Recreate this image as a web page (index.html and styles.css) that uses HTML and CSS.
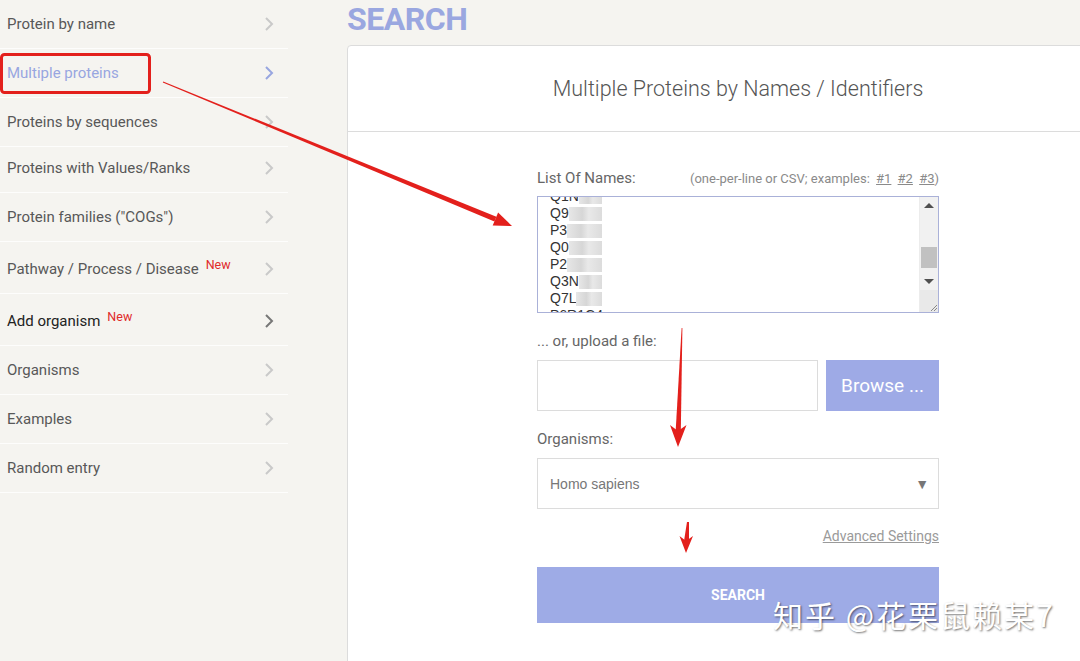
FILE: index.html
```html
<!DOCTYPE html>
<html lang="en">
<head>
  <meta charset="UTF-8" />
  <title>Search - Multiple proteins</title>
  <link rel="stylesheet" href="styles.css">
</head>
<body>

<div class="page">
  <!-- Left menu -->
  <nav class="sidebar">
    <a class="item">Protein by name <span class="chev"><svg width="10" height="16" viewBox="0 0 10 16"><polyline points="2,2 8,8 2,14" /></svg></span></a>
    <a class="item active">Multiple proteins <span class="chev"><svg width="10" height="16" viewBox="0 0 10 16"><polyline points="2,2 8,8 2,14" /></svg></span></a>
    <a class="item">Proteins by sequences <span class="chev"><svg width="10" height="16" viewBox="0 0 10 16"><polyline points="2,2 8,8 2,14" /></svg></span></a>
    <a class="item tight">Proteins with Values/Ranks <span class="chev"><svg width="10" height="16" viewBox="0 0 10 16"><polyline points="2,2 8,8 2,14" /></svg></span></a>
    <a class="item">Protein families ("COGs") <span class="chev"><svg width="10" height="16" viewBox="0 0 10 16"><polyline points="2,2 8,8 2,14" /></svg></span></a>
    <a class="item has-new">Pathway / Process / Disease <sup class="new">New</sup> <span class="chev"><svg width="10" height="16" viewBox="0 0 10 16"><polyline points="2,2 8,8 2,14" /></svg></span></a>
    <a class="item has-new dark">Add organism <sup class="new">New</sup> <span class="chev"><svg width="10" height="16" viewBox="0 0 10 16"><polyline points="2,2 8,8 2,14" /></svg></span></a>
    <a class="item">Organisms <span class="chev"><svg width="10" height="16" viewBox="0 0 10 16"><polyline points="2,2 8,8 2,14" /></svg></span></a>
    <a class="item">Examples <span class="chev"><svg width="10" height="16" viewBox="0 0 10 16"><polyline points="2,2 8,8 2,14" /></svg></span></a>
    <a class="item">Random entry <span class="chev"><svg width="10" height="16" viewBox="0 0 10 16"><polyline points="2,2 8,8 2,14" /></svg></span></a>
  </nav>

  <!-- Main search panel -->
  <main class="main">
    <h1 class="page-title">SEARCH</h1>
    <section class="card">
      <header class="card-head">Multiple Proteins by Names / Identifiers</header>

      <div class="form">
        <div class="label-row">
          <label>List Of Names:</label>
          <span class="hint">(one-per-line or CSV; examples: <a>#1</a> <a>#2</a> <a>#3</a>)</span>
        </div>
        <div class="names-box">
          <div class="names">
            <div class="names-lines">
              <div class="id">Q1N<span class="blur"></span></div>
              <div class="id">Q9<span class="blur"></span></div>
              <div class="id">P3<span class="blur"></span></div>
              <div class="id">Q0<span class="blur"></span></div>
              <div class="id">P2<span class="blur"></span></div>
              <div class="id">Q3N<span class="blur"></span></div>
              <div class="id">Q7L<span class="blur"></span></div>
              <div class="id">P6R1C4</div>
            </div>
          </div>
          <div class="scrollbar">
            <span class="sb-up"></span>
            <span class="sb-track"><span class="sb-thumb"></span></span>
            <span class="sb-down"></span>
            <span class="sb-grip"><svg width="10" height="10" viewBox="0 0 10 10"><line x1="9" y1="3" x2="3" y2="9" /><line x1="9" y1="6" x2="6" y2="9" /></svg></span>
          </div>
        </div>

        <label class="field-label">... or, upload a file:</label>
        <div class="upload-row">
          <div class="file-box"></div>
          <button class="browse">Browse ...</button>
        </div>

        <label class="field-label">Organisms:</label>
        <div class="select">
          <span>Homo sapiens</span>
          <span class="caret">&#9660;</span>
        </div>

        <div class="adv"><a>Advanced Settings</a></div>

        <button class="search-btn">SEARCH</button>
      </div>
    </section>
  </main>
</div>

<!-- red annotation marks -->
<svg class="marks" width="1080" height="661" viewBox="0 0 1080 661">
  <rect x="1.5" y="54.5" width="148" height="38" rx="3" fill="none" stroke="#e3201c" stroke-width="3" />
  <polygon points="163.2,81.5 496.4,216.8 494.4,221.4 162.8,82.5" />
  <polygon points="512,226 498.1,212.6 492.7,225.6" />
  <polygon points="681.6,328 682.4,328 680.8,432 675.6,432" />
  <polygon points="678,447 670,425 678,431 686.5,425" />
  <polygon points="687,522 689,522 689,541 684,541" />
  <polygon points="686,553 679.5,536 686,541 693,536" />
</svg>

<div class="watermark">知乎 @花栗鼠赖某7</div>

</body>
</html>
```

FILE: styles.css
```css
* {
  box-sizing: border-box;
}
body {
  margin: 0;
  background-color: #f5f4f0;
  font-family: Roboto, "Liberation Sans", sans-serif;
  color: #555;
  overflow: hidden;
  height: 661px;
}
.page {
  display: flex;
  align-items: flex-start;
}

/* sidebar */
.sidebar {
  width: 288px;
  flex-shrink: 0;
  display: flex;
  flex-direction: column;
}
.item {
  display: flex;
  align-items: center;
  height: 49px;
  padding-left: 7px;
  padding-right: 14px;
  font-size: 15px;
  color: #585858;
  border-bottom: 1px solid #fdfdfc;
}
.item.tight {
  height: 46px;
  padding-bottom: 4px;
}
.item.has-new {
  height: 52px;
  padding-top: 3px;
}
.item.active {
  color: #98a6e0;
}
.item.dark {
  color: #222;
}
.new {
  color: #e02a2a;
  font-size: 12.5px;
  margin-left: 7px;
  position: relative;
  top: -5px;
  vertical-align: baseline;
}
.chev {
  margin-left: auto;
  display: flex;
}
.chev polyline {
  fill: none;
  stroke: #c9c9c9;
  stroke-width: 2;
}
.active .chev polyline {
  stroke: #98a6e0;
}
.dark .chev polyline {
  stroke: #777;
}

/* main */
.main {
  margin-left: 59px;
  width: 782px;
  flex-shrink: 0;
}
.page-title {
  margin: 0;
  height: 45px;
  font-size: 32px;
  line-height: 38px;
  font-weight: 700;
  color: #9aa7e0;
  letter-spacing: -0.5px;
}
.card {
  background-color: #fff;
  border: 1px solid #dcdcdc;
  border-radius: 4px 0 0 0;
  height: 640px;
}
.card-head {
  height: 86px;
  border-bottom: 1px solid #dcdcdc;
  display: flex;
  align-items: center;
  justify-content: center;
  font-size: 21.5px;
  font-weight: 300;
  color: #555;
  padding-bottom: 1px;
}
.form {
  width: 402px;
  margin: 0 auto;
  padding-top: 37px;
  display: flex;
  flex-direction: column;
}
.label-row {
  display: flex;
  justify-content: space-between;
  align-items: baseline;
  height: 18px;
  margin-bottom: 9px;
}
.label-row label,
.field-label {
  font-size: 15px;
  color: #666;
  line-height: 18px;
}
.hint {
  font-size: 13px;
  color: #8a8a8a;
}
.hint a {
  text-decoration: underline;
  margin-left: 3px;
}

/* names textarea */
.names-box {
  height: 117px;
  border: 1px solid #aab1d8;
  display: flex;
}
.names {
  flex: 1;
  overflow: hidden;
  padding-left: 12px;
}
.names-lines {
  margin-top: -9px;
  font-family: "Liberation Sans", Arial, sans-serif;
  font-size: 14px;
  line-height: 17px;
  color: #333;
}
.id {
  display: flex;
  align-items: center;
  width: 52px;
}
.blur {
  flex: 1;
  height: 14px;
  background: linear-gradient(90deg, #e4e4e4, #d2d2d2 40%, #e6e6e6 60%, #d8d8d8);
  opacity: 0.9;
}
.scrollbar {
  width: 19px;
  display: flex;
  flex-direction: column;
  background-color: #f1f1f1;
  border-left: 1px solid #ececec;
}
.sb-up,
.sb-down {
  height: 17px;
  display: flex;
  justify-content: center;
  align-items: center;
}
.sb-up::before {
  content: "";
  border-left: 5px solid transparent;
  border-right: 5px solid transparent;
  border-bottom: 5px solid #505050;
}
.sb-down::before {
  content: "";
  border-left: 5px solid transparent;
  border-right: 5px solid transparent;
  border-top: 5px solid #505050;
}
.sb-track {
  flex: 1;
  display: flex;
  flex-direction: column;
  justify-content: flex-end;
  padding: 0 1px 5px;
}
.sb-thumb {
  height: 21px;
  background-color: #c1c1c1;
}
.sb-grip {
  height: 22px;
  display: flex;
  justify-content: flex-end;
  align-items: flex-end;
  background-color: #e9e9e9;
}
.sb-grip line {
  stroke: #888;
  stroke-width: 1;
}

/* upload + organisms */
.field-label {
  margin-top: 19px;
  margin-bottom: 10px;
}
.upload-row {
  display: flex;
  gap: 8px;
  height: 51px;
}
.file-box {
  flex: 1;
  border: 1px solid #dcdcdc;
}
.browse {
  width: 113px;
  border: none;
  background-color: #9eaae6;
  color: #fff;
  font-family: Roboto, sans-serif;
  font-size: 19px;
}
.select {
  height: 51px;
  border: 1px solid #dcdcdc;
  display: flex;
  align-items: center;
  padding: 0 9px 0 12px;
  font-family: "Liberation Sans", Arial, sans-serif;
  font-size: 14px;
  color: #777;
}
.caret {
  margin-left: auto;
  font-size: 14px;
  color: #777;
}
.adv {
  margin-top: 19px;
  text-align: right;
  font-size: 14px;
  line-height: 17px;
}
.adv a {
  color: #9a9a9a;
  text-decoration: underline;
}
.search-btn {
  margin-top: 22px;
  height: 56px;
  border: none;
  background-color: #9eabe6;
  color: #fff;
  font-family: Roboto, sans-serif;
  font-weight: 700;
  font-size: 14px;
}

/* overlays */
.marks {
  position: absolute;
  left: 0;
  top: 0;
  pointer-events: none;
}
.marks polygon {
  fill: #e3201c;
}
.watermark {
  position: absolute;
  left: 773px;
  top: 592px;
  font-family: "Noto Sans CJK SC", sans-serif;
  font-size: 30px;
  color: #fff;
  text-shadow: 1px 1px 2px rgba(0, 0, 0, 0.55);
  white-space: nowrap;
  letter-spacing: 2px;
}
```
